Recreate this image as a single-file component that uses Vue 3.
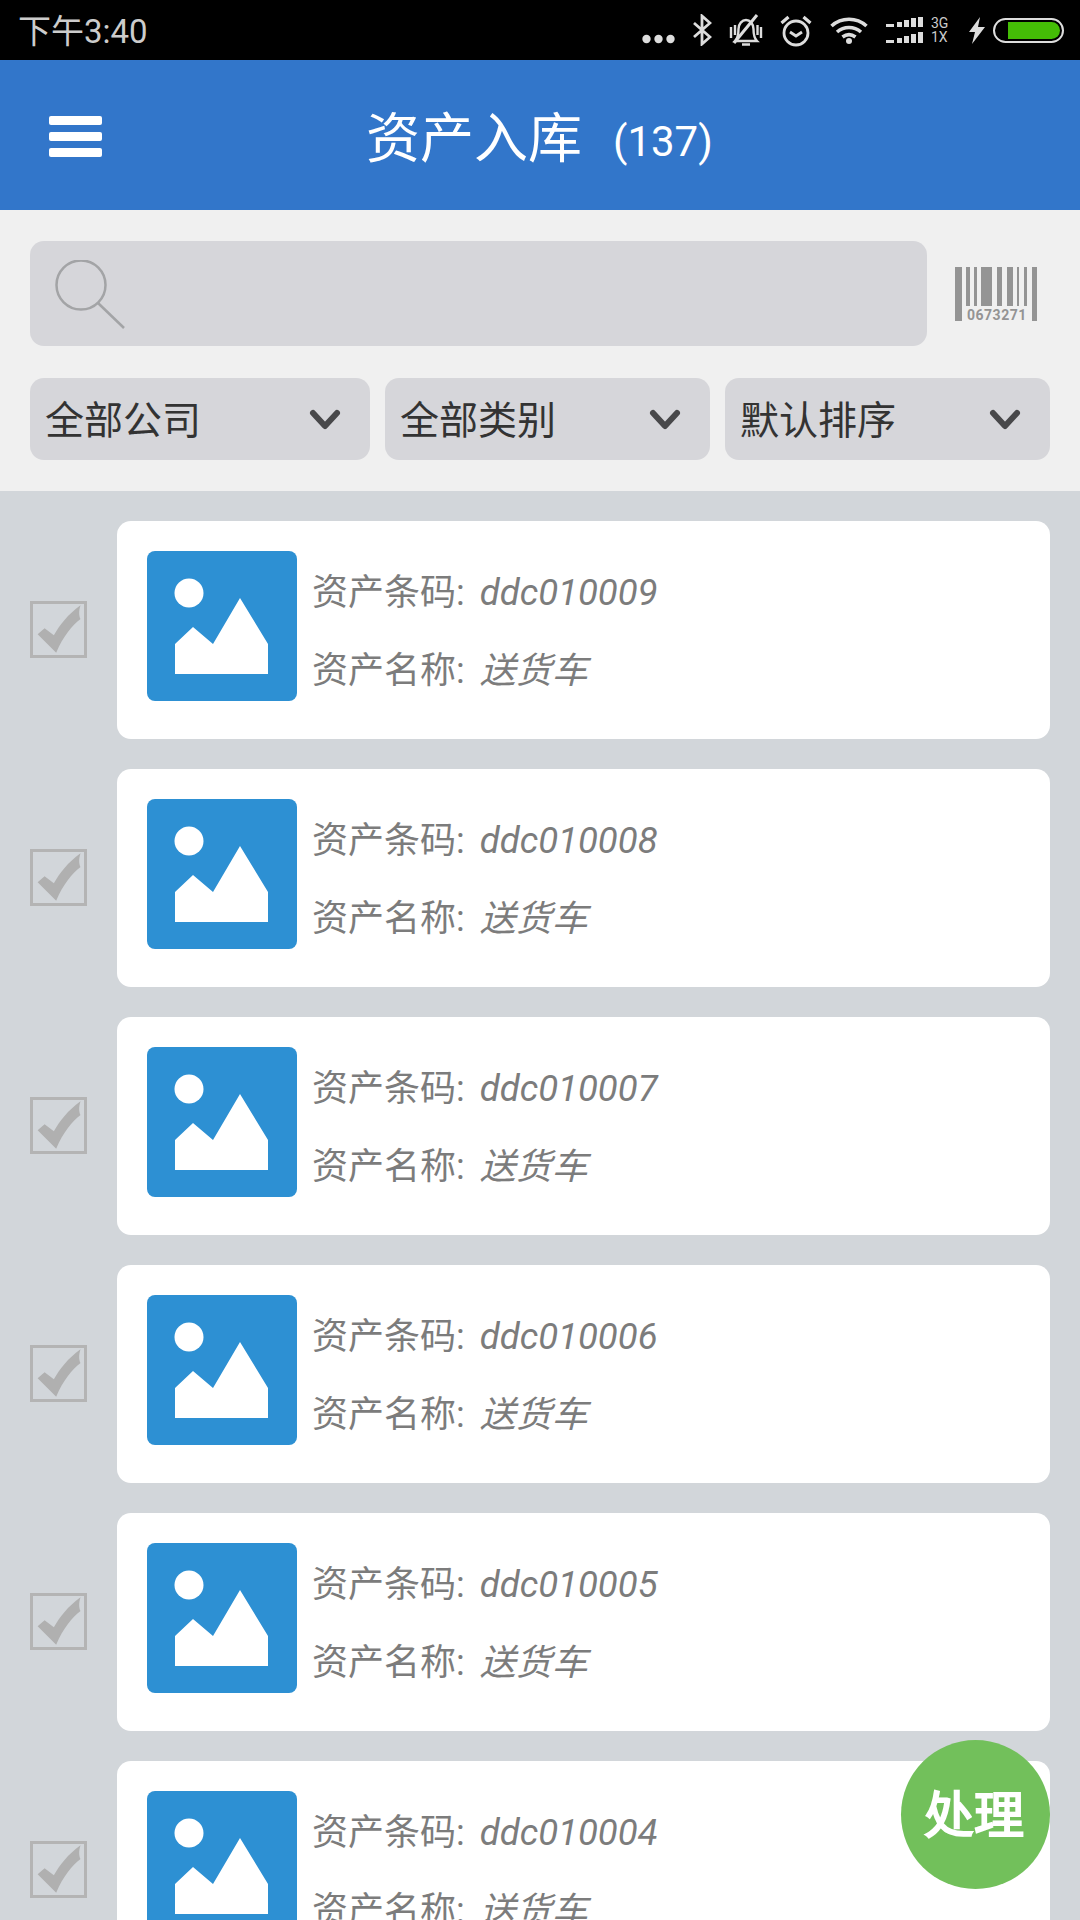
<template>
  <div class="screen">
    <div class="status-bar">
      <span class="time">下午3:40</span>
      <div class="status-icons">
        <svg class="s-dots" width="33" height="10" viewBox="0 0 33 10"><circle cx="4.500" cy="5" r="4.200" /><circle cx="16.500" cy="5" r="4.200" /><circle cx="28.500" cy="5" r="4.200" /></svg>
        <svg class="s-bt" width="20" height="32" viewBox="0 0 20 32" fill="none" stroke="#ddd" stroke-width="2.800"><path d="M2 9l16 14-8 7V2l8 7L2 23" /></svg>
        <svg class="s-bell" width="34" height="32" viewBox="0 0 34 32" fill="none" stroke="#ddd" stroke-width="2.400">
          <path d="M6 27c3-3 3.500-7 3.500-12 0-5 3.500-9 7.500-9s7.500 4 7.500 9c0 5 .5 9 3.500 12z" />
          <path d="M13 30.500h8M2 13v11M6 11v10M32 13v11M28.500 11v10" />
          <path d="M5 29L28 1" stroke-width="3" />
        </svg>
        <svg class="s-alarm" width="32" height="33" viewBox="0 0 32 33" fill="none" stroke="#ddd" stroke-width="2.800">
          <circle cx="16" cy="19" r="12" />
          <path d="M10 18l6 4 6-4" />
          <path d="M1.500 9l7-6M30.500 9l-7-6" stroke-width="3.200" />
        </svg>
        <svg class="s-wifi" width="38" height="27" viewBox="0 0 38 27" fill="none" stroke="#ddd" stroke-width="3.600">
          <path d="M1.500 9c10-9 25-9 35 0M7 15c7-6 17-6 24 0M12.500 20c4-3 9-3 13 0" />
          <circle cx="19" cy="24" r="3" fill="#ddd" stroke="none" />
        </svg>
        <svg class="s-signal" width="38" height="26" viewBox="0 0 38 26">
          <path d="M0 7h8v3H0zM11 5h5v5h-5zM18 3h5v7h-5zM25 1h5v9h-5zM32 0h5v10h-5z" />
          <path d="M0 23h8v3H0zM11 21h5v5h-5zM18 19h5v7h-5zM25 17h5v9h-5zM32 15h5v11h-5z" />
        </svg>
        <span class="net"><span>3G</span><span>1X</span></span>
        <svg class="s-bolt" width="16" height="27" viewBox="0 0 16 27"><path d="M11 0L0 15h6L3 27 16 10H9z" /></svg>
        <div class="battery"><div class="battery-fill"></div></div>
      </div>
    </div>

    <header class="app-header">
      <svg class="menu" width="53" height="41" viewBox="0 0 53 41" fill="#fff">
        <rect width="53" height="9" rx="2" />
        <rect y="16" width="53" height="9" rx="2" />
        <rect y="32" width="53" height="9" rx="2" />
      </svg>
      <h1 class="title">资产入库<span class="count">(137)</span></h1>
    </header>

    <section class="filters">
      <div class="search-row">
        <div class="search">
          <svg width="72" height="72" viewBox="0 0 72 72" fill="none" stroke="#a3a4a6" stroke-width="2.500">
            <circle cx="26" cy="25" r="24.500" />
            <path d="M43 43l26 25" />
          </svg>
        </div>
        <div class="barcode">
          <div class="bars">
            <i v-for="(b, i) in bars" :key="i" :style="{ width: b.w + 'px', marginLeft: b.m + 'px', height: b.tall ? '54px' : '39px' }"></i>
          </div>
          <span class="barcode-num">0673271</span>
        </div>
      </div>
      <div class="select-row">
        <div v-for="s in selects" :key="s.label" class="select" :class="s.cls">
          <span>{{ s.label }}</span>
          <svg width="32" height="24" viewBox="0 0 32 24" fill="none" stroke="#48484a" stroke-width="6" stroke-linecap="round" stroke-linejoin="round"><path d="M4 4l12 13L28 4" /></svg>
        </div>
      </div>
    </section>

    <section class="list">
      <div v-for="item in items" :key="item" class="row">
        <div class="check">
          <svg width="51" height="51" viewBox="0 0 44 44" fill="#b0b0b0"><path d="M4 26l6-5 8 6C23 18 30 9 41 1c-2 6-1 10 0 12-7 5-15 15-21 29z" /></svg>
        </div>
        <div class="card">
          <div class="thumb">
            <svg width="150" height="150" viewBox="0 0 150 150" fill="#fff">
              <circle cx="42" cy="42" r="14.500" />
              <path d="M28 93l18-17 20 17 27-46 28 46v30H28z" />
            </svg>
          </div>
          <div class="info">
            <div class="line">资产条码:<em class="code">{{ item }}</em></div>
            <div class="line">资产名称:<em>送货车</em></div>
          </div>
        </div>
      </div>
    </section>

    <button class="fab">处理</button>
  </div>
</template>

<script setup>
const selects = [
  { label: '全部公司', cls: 'w1' },
  { label: '全部类别', cls: 'w2' },
  { label: '默认排序', cls: 'w3' },
]

const items = ['ddc010009', 'ddc010008', 'ddc010007', 'ddc010006', 'ddc010005', 'ddc010004']

const bars = [
  { w: 7, m: 0, tall: true },
  { w: 4, m: 4, tall: false },
  { w: 3, m: 4, tall: false },
  { w: 11, m: 4, tall: false },
  { w: 5, m: 5, tall: false },
  { w: 6, m: 5, tall: false },
  { w: 2, m: 4, tall: false },
  { w: 3, m: 5, tall: false },
  { w: 5, m: 5, tall: true },
]
</script>

<style>
body {
  margin: 0;
  background: #d2d6da;
}
</style>

<style scoped>
.screen {
  position: relative;
  width: 1080px;
  height: 1920px;
  overflow: hidden;
  background: #d2d6da;
  font-family: Roboto, "Noto Sans CJK SC", sans-serif;
}

.status-bar {
  height: 60px;
  background: #000;
  display: flex;
  align-items: center;
  justify-content: space-between;
  padding: 0 16px 0 18px;
  color: #ccc;
}

.time {
  font-size: 33px;
  margin-top: -2px;
}

.status-icons {
  display: flex;
  align-items: center;
  height: 60px;
}

.status-icons svg {
  fill: #ddd;
  flex: none;
}

.status-icons svg[fill='none'] {
  fill: none;
}

.s-dots {
  margin-top: 18px;
}

.s-bt {
  margin-left: 17px;
}

.s-bell {
  margin-left: 17px;
}

.s-alarm {
  margin-left: 17px;
}

.s-wifi {
  margin-left: 18px;
}

.s-signal {
  margin-left: 18px;
}

.net {
  display: flex;
  flex-direction: column;
  margin-left: 7px;
  width: 23px;
  font-size: 14px;
  line-height: 14px;
  color: #ccc;
}

.s-bolt {
  margin-left: 15px;
}

.battery {
  margin-left: 8px;
  width: 71px;
  height: 25px;
  box-sizing: border-box;
  border: 2px solid #ddd;
  border-radius: 13px;
  padding: 2px;
  display: flex;
  justify-content: flex-end;
}

.battery-fill {
  width: 52px;
  background: #44bd06;
  border-radius: 0 9px 9px 0;
}

.app-header {
  position: relative;
  height: 150px;
  background: #3276ca;
  display: flex;
  align-items: center;
  padding-left: 49px;
}

.menu {
  margin-top: 3px;
}

.title {
  margin: -2px 0 0 264px;
  font-size: 54px;
  font-weight: 400;
  color: #fff;
  white-space: nowrap;
}

.count {
  margin-left: 31px;
  font-size: 42px;
  vertical-align: 2px;
}

.filters {
  height: 281px;
  box-sizing: border-box;
  background: #f0f0f0;
  padding: 31px 30px 0;
}

.search-row {
  display: flex;
  align-items: center;
}

.search {
  width: 897px;
  height: 105px;
  background: #d6d6da;
  border-radius: 14px;
  padding: 19px 0 0 25px;
  box-sizing: border-box;
}

.barcode {
  position: relative;
  margin-left: 28px;
  width: 83px;
  height: 54px;
}

.bars {
  display: flex;
  align-items: flex-start;
}

.bars i {
  display: block;
  background: #949494;
}

.barcode-num {
  position: absolute;
  left: 12px;
  top: 41px;
  font-size: 14px;
  line-height: 14px;
  font-weight: 700;
  letter-spacing: 0.500px;
  color: #949494;
}

.select-row {
  display: flex;
  gap: 15px;
  margin-top: 32px;
}

.select {
  height: 82px;
  box-sizing: border-box;
  background: #d6d6da;
  border-radius: 14px;
  display: flex;
  align-items: center;
  justify-content: space-between;
  padding: 0 29px 0 15px;
  font-size: 39px;
  line-height: 78px;
  color: #333;
}

.select span {
  margin-top: 4px;
}

.select svg {
  margin-top: 3px;
}

.w1 {
  width: 340px;
}

.w2 {
  width: 325px;
}

.w3 {
  width: 325px;
}

.list {
  display: flex;
  flex-direction: column;
  gap: 30px;
  padding: 30px 30px 0;
}

.row {
  display: flex;
  align-items: center;
}

.check {
  width: 57px;
  height: 57px;
  margin-top: -2px;
  box-sizing: border-box;
  border: 3px solid #b4b4b4;
  display: flex;
  align-items: center;
  justify-content: center;
  flex: none;
}

.card {
  margin-left: 30px;
  width: 933px;
  height: 218px;
  box-sizing: border-box;
  background: #fff;
  border-radius: 14px;
  padding: 30px;
  display: flex;
  flex: none;
}

.thumb {
  width: 150px;
  height: 150px;
  border-radius: 8px;
  background: #2d90d3;
  flex: none;
}

.info {
  margin-left: 15px;
  display: flex;
  flex-direction: column;
  gap: 28px;
  padding-top: 17px;
}

.line {
  font-size: 36px;
  line-height: 50px;
  color: #7c7c7c;
  white-space: nowrap;
}

.line em {
  margin-left: 15px;
  font-style: italic;
}

.line .code {
  font-size: 36.500px;
}

.fab {
  position: absolute;
  left: 901px;
  top: 1740px;
  width: 149px;
  height: 149px;
  border: 0;
  border-radius: 50%;
  padding: 0 3px 8px 0;
  background: #72c05b;
  color: #fff;
  font-family: "Noto Sans CJK SC", sans-serif;
  font-size: 50px;
  font-weight: 400;
  -webkit-text-stroke: 2px #fff;
}
</style>
